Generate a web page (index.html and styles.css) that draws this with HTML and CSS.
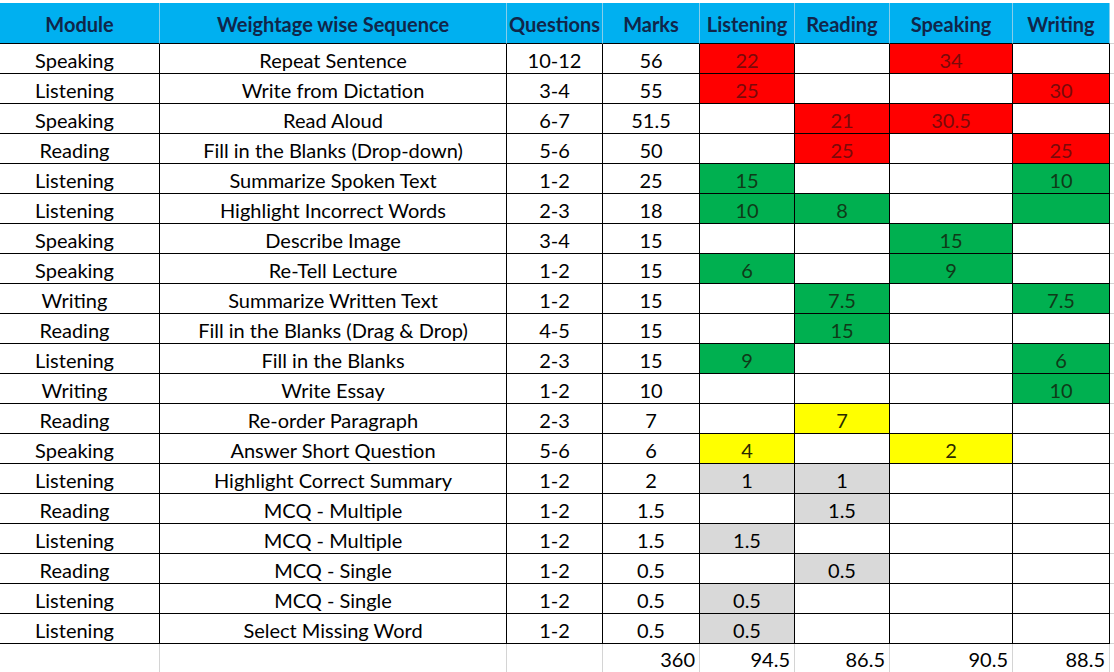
FILE: index.html
```html
<!DOCTYPE html>
<html>
<head>
<meta charset="utf-8">
<link rel="stylesheet" href="styles.css">
</head>
<body>
<div class="sheet">
<table class="grid">
<colgroup>
<col class="c-module"><col class="c-seq"><col class="c-q"><col class="c-marks"><col class="c-l"><col class="c-r"><col class="c-s"><col class="c-w"><col class="c-pad">
</colgroup>
<thead>
<tr class="head">
<th>Module</th><th>Weightage wise Sequence</th><th>Questions</th><th>Marks</th><th>Listening</th><th>Reading</th><th>Speaking</th><th>Writing</th><th class="pad"></th>
</tr>
</thead>
<tbody>
<tr><td class="mod">Speaking</td><td>Repeat Sentence</td><td>10-12</td><td>56</td><td class="red">22</td><td></td><td class="red">34</td><td></td><td class="pad"></td></tr>
<tr><td class="mod">Listening</td><td>Write from Dictation</td><td>3-4</td><td>55</td><td class="red">25</td><td></td><td></td><td class="red">30</td><td class="pad"></td></tr>
<tr><td class="mod">Speaking</td><td>Read Aloud</td><td>6-7</td><td>51.5</td><td></td><td class="red">21</td><td class="red">30.5</td><td></td><td class="pad"></td></tr>
<tr><td class="mod">Reading</td><td>Fill in the Blanks (Drop-down)</td><td>5-6</td><td>50</td><td></td><td class="red">25</td><td></td><td class="red">25</td><td class="pad"></td></tr>
<tr><td class="mod">Listening</td><td>Summarize Spoken Text</td><td>1-2</td><td>25</td><td class="green">15</td><td></td><td></td><td class="green">10</td><td class="pad"></td></tr>
<tr><td class="mod">Listening</td><td>Highlight Incorrect Words</td><td>2-3</td><td>18</td><td class="green">10</td><td class="green">8</td><td></td><td class="green"></td><td class="pad"></td></tr>
<tr><td class="mod">Speaking</td><td>Describe Image</td><td>3-4</td><td>15</td><td></td><td></td><td class="green">15</td><td></td><td class="pad"></td></tr>
<tr><td class="mod">Speaking</td><td>Re-Tell Lecture</td><td>1-2</td><td>15</td><td class="green">6</td><td></td><td class="green">9</td><td></td><td class="pad"></td></tr>
<tr><td class="mod">Writing</td><td>Summarize Written Text</td><td>1-2</td><td>15</td><td></td><td class="green">7.5</td><td></td><td class="green">7.5</td><td class="pad"></td></tr>
<tr><td class="mod">Reading</td><td>Fill in the Blanks (Drag &amp; Drop)</td><td>4-5</td><td>15</td><td></td><td class="green">15</td><td></td><td></td><td class="pad"></td></tr>
<tr><td class="mod">Listening</td><td>Fill in the Blanks</td><td>2-3</td><td>15</td><td class="green">9</td><td></td><td></td><td class="green">6</td><td class="pad"></td></tr>
<tr><td class="mod">Writing</td><td>Write Essay</td><td>1-2</td><td>10</td><td></td><td></td><td></td><td class="green">10</td><td class="pad"></td></tr>
<tr><td class="mod">Reading</td><td>Re-order Paragraph</td><td>2-3</td><td>7</td><td></td><td class="yellow">7</td><td></td><td></td><td class="pad"></td></tr>
<tr><td class="mod">Speaking</td><td>Answer Short Question</td><td>5-6</td><td>6</td><td class="yellow">4</td><td></td><td class="yellow">2</td><td></td><td class="pad"></td></tr>
<tr><td class="mod">Listening</td><td>Highlight Correct Summary</td><td>1-2</td><td>2</td><td class="grey">1</td><td class="grey">1</td><td></td><td></td><td class="pad"></td></tr>
<tr><td class="mod">Reading</td><td>MCQ - Multiple</td><td>1-2</td><td>1.5</td><td></td><td class="grey">1.5</td><td></td><td></td><td class="pad"></td></tr>
<tr><td class="mod">Listening</td><td>MCQ - Multiple</td><td>1-2</td><td>1.5</td><td class="grey">1.5</td><td></td><td></td><td></td><td class="pad"></td></tr>
<tr><td class="mod">Reading</td><td>MCQ - Single</td><td>1-2</td><td>0.5</td><td></td><td class="grey">0.5</td><td></td><td></td><td class="pad"></td></tr>
<tr><td class="mod">Listening</td><td>MCQ - Single</td><td>1-2</td><td>0.5</td><td class="grey">0.5</td><td></td><td></td><td></td><td class="pad"></td></tr>
<tr><td class="mod">Listening</td><td>Select Missing Word</td><td>1-2</td><td>0.5</td><td class="grey">0.5</td><td></td><td></td><td></td><td class="pad"></td></tr>
<tr class="total"><td></td><td></td><td></td><td>360</td><td>94.5</td><td>86.5</td><td>90.5</td><td>88.5</td><td class="pad"></td></tr>
</tbody>
</table>
</div>
</body>
</html>
```
FILE: styles.css
```css
html, body {
  margin: 0;
  padding: 0;
  background: #ffffff;
}
.sheet {
  padding-top: 3px;
  width: 1114px;
  overflow: hidden;
  font-family: "Lato", "Liberation Sans", sans-serif;
}
.grid {
  border-collapse: separate;
  border-spacing: 0;
  table-layout: fixed;
  width: 1114px;
}
.c-module { width: 160px; }
.c-seq { width: 347px; }
.c-q { width: 96px; }
.c-marks { width: 97px; }
.c-l { width: 95px; }
.c-r { width: 95px; }
.c-s { width: 123px; }
.c-w { width: 97px; }
.c-pad { width: 4px; }
.grid th, .grid td {
  box-sizing: border-box;
  padding: 0;
  text-align: center;
  white-space: nowrap;
  overflow: hidden;
}
.head th {
  height: 41px;
  background: #00b0f0;
  color: #10264a;
  font-weight: 700;
  font-size: 20px;
  border-right: 1px solid #86cdea;
  border-bottom: 1px solid #000;
  padding-top: 1px;
}
.head th.pad {
  background: #fff;
  border-right: 0;
  border-bottom: 1px solid #d4d4d4;
}
.grid td {
  height: 30px;
  font-size: 20px;
  color: #000;
  border-right: 1px solid #000;
  border-bottom: 1px solid #000;
  padding-top: 2px;
}
.grid td.mod {
  padding-right: 10px;
}
.grid td.pad {
  border-right: 0;
  border-bottom: 1px solid #d4d4d4;
}
.red { background: #ff0000; color: #7a0a0a !important; }
.green { background: #00b050; color: #0f3a18 !important; }
.yellow { background: #ffff00; color: #2a2a00 !important; }
.grey { background: #d9d9d9; }
.total td {
  border-right: 1px solid #d4d4d4;
  border-bottom: 1px solid #d4d4d4;
  text-align: right;
  padding-right: 4px;
  height: 29px;
}
```
